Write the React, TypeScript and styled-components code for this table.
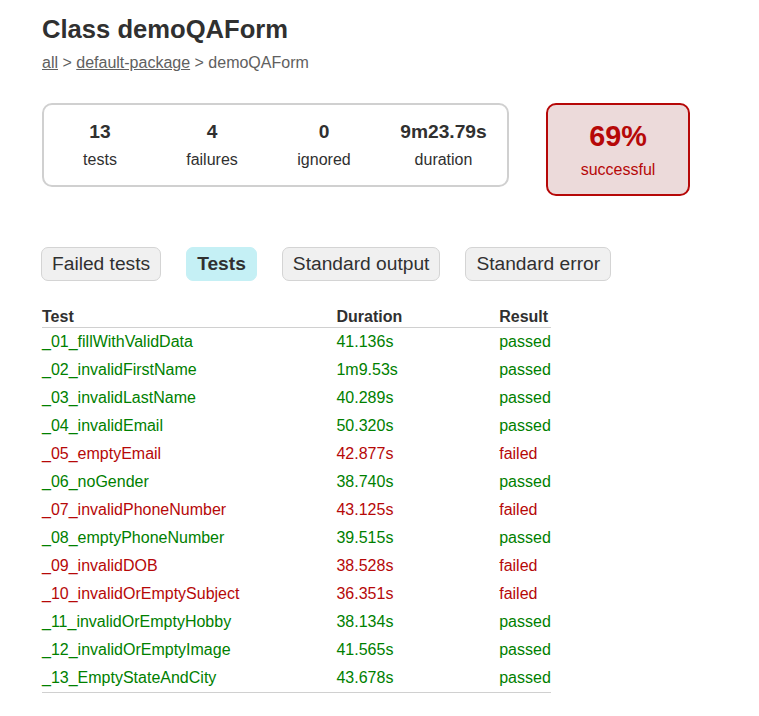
import React from "react";
import styled, { createGlobalStyle } from "styled-components";

const GlobalStyle = createGlobalStyle`
  html, body {
    margin: 0;
    padding: 0;
    background: #ffffff;
  }
  body {
    font-family: "Liberation Sans", Arial, sans-serif;
    font-size: 16px;
    color: #303030;
  }
`;

const Content = styled.div`
  padding: 15px 30px 30px 42px;
`;

const Title = styled.h1`
  font-size: 25.6px;
  font-weight: bold;
  margin: 0 0 10px;
  white-space: nowrap;
  color: #303030;
`;

const Breadcrumbs = styled.div`
  color: #606060;
`;

const Crumb = styled.a`
  color: #606060;
  text-decoration: underline;
`;

const Summary = styled.div`
  margin-top: 31px;
  margin-bottom: 41px;
  display: flex;
  align-items: flex-start;
  gap: 37px;
`;

const SummaryGroup = styled.div`
  border: solid 2px #d0d0d0;
  border-radius: 10px;
  display: flex;
  padding: 1px 0;
`;

const InfoBox = styled.div<{ $w?: number }>`
  width: ${(p) => p.$w ?? 110}px;
  margin: 0 1px;
  padding: 15px 0;
  text-align: center;
`;

const Counter = styled.p`
  margin: 0 0 8px;
  font-size: 19.2px;
  font-weight: bold;
`;

const Label = styled.p`
  margin: 0;
`;

const SuccessRate = styled.div`
  width: 140px;
  border: solid 2px #b60808;
  border-radius: 10px;
  background-color: #ecdada;
  color: #b60808;
  padding: 15px 0;
  text-align: center;
`;

const Percent = styled.p`
  margin: 0 0 8px;
  font-size: 28.8px;
  font-weight: bold;
`;

const TabList = styled.ul`
  display: flex;
  padding: 10px 0;
  margin: 0 0 16px -1px;
  list-style: none;
`;

const Tab = styled.li<{ $selected?: boolean }>`
  padding: 5px 10px;
  margin-right: 25px;
  border-radius: 7px;
  border: solid 1px ${(p) => (p.$selected ? "#c5f0f5" : "#d4d4d4")};
  background-color: ${(p) => (p.$selected ? "#c5f0f5" : "#f0f0f0")};
`;

const TabLink = styled.a<{ $selected?: boolean }>`
  display: block;
  font-size: 19.2px;
  text-decoration: none;
  color: #303030;
  font-weight: ${(p) => (p.$selected ? "bold" : "normal")};
`;

const Table = styled.table`
  border-collapse: collapse;
  border-bottom: solid #d0d0d0 1px;
`;

const Th = styled.th`
  text-align: left;
  white-space: nowrap;
  padding: 1px 1px 1px 96px;
  border-bottom: solid #d0d0d0 1px;
  &:first-child {
    padding-left: 0;
  }
  &:last-child {
    padding-right: 0;
  }
`;

const Td = styled.td<{ $failed?: boolean }>`
  white-space: nowrap;
  padding: 5px 1px 5px 96px;
  color: ${(p) => (p.$failed ? "#b60808" : "#008000")};
  &:first-child {
    padding-left: 0;
  }
  &:last-child {
    padding-right: 0;
  }
`;

type Row = { name: string; duration: string; failed?: boolean };

const rows: Row[] = [
  { name: "_01_fillWithValidData", duration: "41.136s" },
  { name: "_02_invalidFirstName", duration: "1m9.53s" },
  { name: "_03_invalidLastName", duration: "40.289s" },
  { name: "_04_invalidEmail", duration: "50.320s" },
  { name: "_05_emptyEmail", duration: "42.877s", failed: true },
  { name: "_06_noGender", duration: "38.740s" },
  { name: "_07_invalidPhoneNumber", duration: "43.125s", failed: true },
  { name: "_08_emptyPhoneNumber", duration: "39.515s" },
  { name: "_09_invalidDOB", duration: "38.528s", failed: true },
  { name: "_10_invalidOrEmptySubject", duration: "36.351s", failed: true },
  { name: "_11_invalidOrEmptyHobby", duration: "38.134s" },
  { name: "_12_invalidOrEmptyImage", duration: "41.565s" },
  { name: "_13_EmptyStateAndCity", duration: "43.678s" },
];

const tabs = ["Failed tests", "Tests", "Standard output", "Standard error"];

export default function App() {
  return (
    <>
      <GlobalStyle />
      <Content>
        <Title>Class demoQAForm</Title>
        <Breadcrumbs>
          <Crumb href="#">all</Crumb> &gt; <Crumb href="#">default-package</Crumb> &gt; demoQAForm
        </Breadcrumbs>
        <Summary>
          <SummaryGroup>
            <InfoBox>
              <Counter>13</Counter>
              <Label>tests</Label>
            </InfoBox>
            <InfoBox>
              <Counter>4</Counter>
              <Label>failures</Label>
            </InfoBox>
            <InfoBox>
              <Counter>0</Counter>
              <Label>ignored</Label>
            </InfoBox>
            <InfoBox $w={125}>
              <Counter>9m23.79s</Counter>
              <Label>duration</Label>
            </InfoBox>
          </SummaryGroup>
          <SuccessRate>
            <Percent>69%</Percent>
            <Label>successful</Label>
          </SuccessRate>
        </Summary>
        <TabList>
          {tabs.map((t) => (
            <Tab key={t} $selected={t === "Tests"}>
              <TabLink href="#" $selected={t === "Tests"}>
                {t}
              </TabLink>
            </Tab>
          ))}
        </TabList>
        <Table>
          <thead>
            <tr>
              <Th>Test</Th>
              <Th>Duration</Th>
              <Th>Result</Th>
            </tr>
          </thead>
          <tbody>
            {rows.map((r) => (
              <tr key={r.name}>
                <Td $failed={r.failed}>{r.name}</Td>
                <Td $failed={r.failed}>{r.duration}</Td>
                <Td $failed={r.failed}>{r.failed ? "failed" : "passed"}</Td>
              </tr>
            ))}
          </tbody>
        </Table>
      </Content>
    </>
  );
}
